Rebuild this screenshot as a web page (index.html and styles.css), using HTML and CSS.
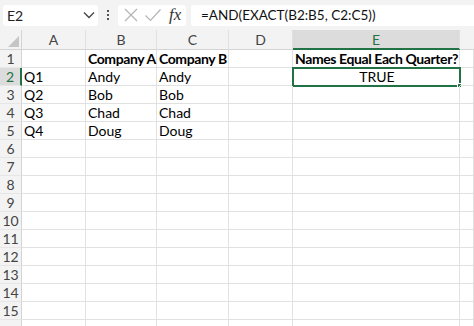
FILE: index.html
```html
<!DOCTYPE html>
<html lang="en">
<head>
    <meta charset="UTF-8">
    <title>Book1 - Excel</title>
    <link rel="stylesheet" href="styles.css">
</head>
<body>
    <div class="formulaBar">
        <div class="nameBox">
            <span>E2</span>
            <svg class="chevron" width="12" height="8" viewBox="0 0 12 8"><path d="M1 1.5 L6 6.5 L11 1.5" fill="none" stroke="#444" stroke-width="1.3"/></svg>
        </div>
        <div class="dots"><i></i><i></i><i></i></div>
        <div class="fxBox">
            <svg width="16" height="16" viewBox="0 0 16 16"><path d="M2 2 L14 14 M14 2 L2 14" stroke="#b4b4b4" stroke-width="1.2"/></svg>
            <svg width="18" height="16" viewBox="0 0 18 16"><path d="M1.5 8.5 L6.5 13.5 L16.5 2.5" fill="none" stroke="#b4b4b4" stroke-width="1.2"/></svg>
            <span class="fx">fx</span>
        </div>
        <div class="formulaInput">=AND(EXACT(B2:B5, C2:C5))</div>
    </div>

    <div class="sheet">
        <div class="corner"></div>
        <div class="colHead">A</div>
        <div class="colHead">B</div>
        <div class="colHead">C</div>
        <div class="colHead">D</div>
        <div class="colHead active">E</div>
        <div class="colHead last"></div>

        <div class="rowHead">1</div>
        <div class="cell"></div>
        <div class="cell bold">Company A</div>
        <div class="cell bold">Company B</div>
        <div class="cell"></div>
        <div class="cell bold">Names Equal Each Quarter?</div>
        <div class="cell"></div>

        <div class="rowHead active">2</div>
        <div class="cell">Q1</div>
        <div class="cell">Andy</div>
        <div class="cell">Andy</div>
        <div class="cell"></div>
        <div class="cell center selected">TRUE</div>
        <div class="cell"></div>

        <div class="rowHead">3</div>
        <div class="cell">Q2</div>
        <div class="cell">Bob</div>
        <div class="cell">Bob</div>
        <div class="cell"></div>
        <div class="cell"></div>
        <div class="cell"></div>

        <div class="rowHead">4</div>
        <div class="cell">Q3</div>
        <div class="cell">Chad</div>
        <div class="cell">Chad</div>
        <div class="cell"></div>
        <div class="cell"></div>
        <div class="cell"></div>

        <div class="rowHead">5</div>
        <div class="cell">Q4</div>
        <div class="cell">Doug</div>
        <div class="cell">Doug</div>
        <div class="cell"></div>
        <div class="cell"></div>
        <div class="cell"></div>

        <div class="rowHead">6</div>
        <div class="cell"></div><div class="cell"></div><div class="cell"></div><div class="cell"></div><div class="cell"></div><div class="cell"></div>
        <div class="rowHead">7</div>
        <div class="cell"></div><div class="cell"></div><div class="cell"></div><div class="cell"></div><div class="cell"></div><div class="cell"></div>
        <div class="rowHead">8</div>
        <div class="cell"></div><div class="cell"></div><div class="cell"></div><div class="cell"></div><div class="cell"></div><div class="cell"></div>
        <div class="rowHead">9</div>
        <div class="cell"></div><div class="cell"></div><div class="cell"></div><div class="cell"></div><div class="cell"></div><div class="cell"></div>
        <div class="rowHead">10</div>
        <div class="cell"></div><div class="cell"></div><div class="cell"></div><div class="cell"></div><div class="cell"></div><div class="cell"></div>
        <div class="rowHead">11</div>
        <div class="cell"></div><div class="cell"></div><div class="cell"></div><div class="cell"></div><div class="cell"></div><div class="cell"></div>
        <div class="rowHead">12</div>
        <div class="cell"></div><div class="cell"></div><div class="cell"></div><div class="cell"></div><div class="cell"></div><div class="cell"></div>
        <div class="rowHead">13</div>
        <div class="cell"></div><div class="cell"></div><div class="cell"></div><div class="cell"></div><div class="cell"></div><div class="cell"></div>
        <div class="rowHead">14</div>
        <div class="cell"></div><div class="cell"></div><div class="cell"></div><div class="cell"></div><div class="cell"></div><div class="cell"></div>
        <div class="rowHead">15</div>
        <div class="cell"></div><div class="cell"></div><div class="cell"></div><div class="cell"></div><div class="cell"></div><div class="cell"></div>
        <div class="rowHead"></div>
        <div class="cell"></div><div class="cell"></div><div class="cell"></div><div class="cell"></div><div class="cell"></div><div class="cell"></div>
    </div>
</body>
</html>
```

FILE: styles.css
```css
body {
    margin: 0;
    width: 474px;
    height: 326px;
    overflow: hidden;
    background-color: #fff;
    font-family: Lato, "Open Sans", sans-serif;
    color: #000;
}

.formulaBar {
    display: flex;
    align-items: center;
    height: 30px;
    padding: 0 0 0 3px;
    background-color: #f3f3f3;
    box-sizing: border-box;
}

.nameBox {
    display: flex;
    align-items: center;
    justify-content: space-between;
    width: 95px;
    height: 21px;
    padding: 0 3px 0 4px;
    box-sizing: border-box;
    background-color: #fff;
    border-radius: 3px;
    font-size: 14px;
    color: #222;
}

.dots {
    display: flex;
    flex-direction: column;
    gap: 2px;
    margin: 0 9px 0 9px;
}

.dots i {
    display: block;
    width: 2px;
    height: 2px;
    background-color: #555;
}

.fxBox {
    display: flex;
    align-items: center;
    gap: 5px;
    width: 68px;
    height: 21px;
    padding-left: 5px;
    box-sizing: border-box;
    background-color: #fff;
    border-radius: 3px;
}

.fx {
    font-family: "Liberation Serif", serif;
    font-style: italic;
    font-size: 17px;
    color: #333;
    margin-left: 2px;
}

.formulaInput {
    flex: 1;
    height: 21px;
    line-height: 21px;
    margin-left: 5px;
    padding-left: 10px;
    background-color: #fff;
    border-radius: 3px 0 0 3px;
    font-size: 13.5px;
    color: #111;
}

.sheet {
    display: grid;
    grid-template-columns: 22px 64px 71px 72px 64px 167px 1fr;
    grid-template-rows: 20px;
    grid-auto-rows: 18px;
    font-size: 14px;
}

.corner {
    position: relative;
    background-color: #f3f3f3;
    border-right: 1px solid #d4d4d4;
    border-bottom: 1px solid #d4d4d4;
}

.corner::after {
    content: "";
    position: absolute;
    right: 2px;
    bottom: 2px;
    border-left: 11px solid transparent;
    border-bottom: 11px solid #c6c6c6;
}

.colHead {
    display: flex;
    align-items: center;
    justify-content: center;
    background-color: #f3f3f3;
    border-right: 1px solid #e0e0e0;
    border-bottom: 1px solid #d4d4d4;
    font-size: 14px;
    color: #444;
}

.colHead.active {
    background-color: #dcdcdc;
    color: #217346;
    border-bottom: 2px solid #217346;
}

.colHead.last {
    border-right: none;
}

.rowHead {
    display: flex;
    align-items: center;
    justify-content: center;
    background-color: #f3f3f3;
    border-right: 1px solid #d4d4d4;
    border-bottom: 1px solid #e6e6e6;
    font-size: 14px;
    color: #444;
}

.rowHead.active {
    background-color: #dcdcdc;
    color: #217346;
    border-right: 2px solid #217346;
}

.cell {
    position: relative;
    padding-left: 2px;
    border-right: 1px solid #e1e1e1;
    border-bottom: 1px solid #e1e1e1;
    line-height: 17px;
    white-space: nowrap;
}

.bold {
    font-weight: bold;
    letter-spacing: -0.4px;
}

.center {
    text-align: center;
}

.selected {
    outline: 2px solid #217346;
    outline-offset: -1px;
}

.selected::after {
    content: "";
    position: absolute;
    right: -3px;
    bottom: -3px;
    width: 5px;
    height: 5px;
    background-color: #217346;
    border: 1px solid #fff;
    box-sizing: border-box;
}
```
